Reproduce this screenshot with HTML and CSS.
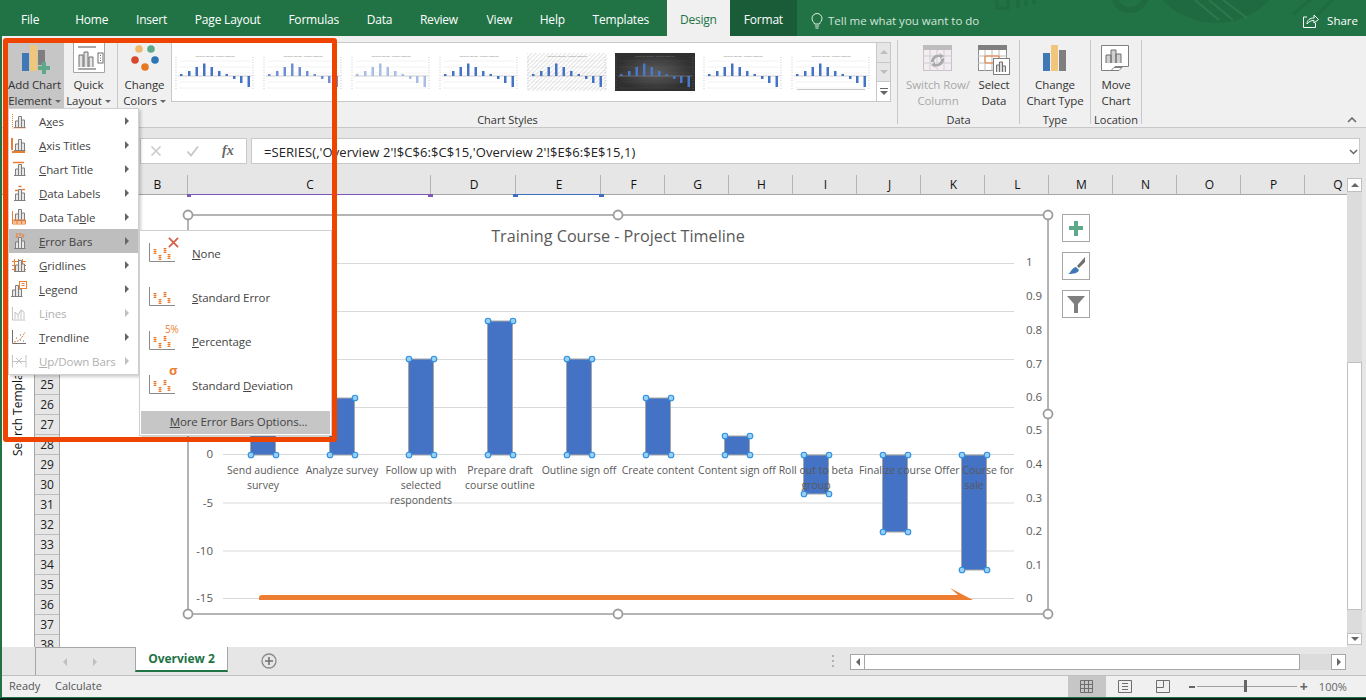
FILE: index.html
```html
<!DOCTYPE html>
<html>
<head>
    <meta charset="utf-8">
    <title>Excel - Add Chart Element</title>
    <link rel="stylesheet" href="styles.css">
</head>
<body>
<!-- shared icon shapes -->
<svg class="defs" width="0" height="0">
    <defs>
        <symbol id="minibars" viewBox="0 0 16 16">
            <path d="M4.500 14V8h3v6M7.500 14V3.500h3V14M10.500 14V7h3v7" fill="#e8e8e8" stroke="#7f7f7f"/>
            <path d="M3 14.500h11.500" stroke="#7f7f7f"/>
        </symbol>
        <symbol id="whiskers" viewBox="0 0 28 20">
            <path d="M.5 0v18.500H26" fill="none" stroke="#8a8a8a"/>
            <path d="M4.500 6.500h3M6 6.500v4M4.500 8.500h3M4.500 10.500h3M9.500 12.500h3M11 12.500v4M9.500 14.500h3M9.500 16.500h3M14.500 5.500h3M16 5.500v4M14.500 7.500h3M14.500 9.500h3M18.500 11.500h3M20 11.500v4M18.500 13.500h3M18.500 15.500h3" fill="none" stroke="#ed7d31"/>
        </symbol>
        <symbol id="thumb" viewBox="0 0 80 38">
            <text x="40" y="3.500" class="thumb-title">Training Course - Project Timeline</text>
            <path d="M4 8h72M4 14h72M4 20h72M4 29h72M4 35h72" stroke="#888" stroke-width=".3" opacity=".35"/>
            <path d="M1 4v32M78 4v32" stroke="#888" stroke-width="1" stroke-dasharray=".6 2" opacity=".7"/>
            <path d="M3 23h74" stroke="#999" stroke-width=".5"/>
            <g fill="currentColor">
                <rect x="5" y="21" width="2.500" height="2"/><rect x="13" y="18" width="2.500" height="5"/>
                <rect x="20.500" y="14" width="2.500" height="9"/><rect x="28" y="10.500" width="2.500" height="12.500"/>
                <rect x="35.500" y="14" width="2.500" height="9"/><rect x="43" y="18" width="2.500" height="5"/>
                <rect x="50.500" y="21" width="2.500" height="2"/><rect x="58" y="23" width="2.500" height="3"/>
                <rect x="65" y="23" width="2.500" height="7"/><rect x="72.500" y="23" width="2.500" height="11"/>
            </g>
        </symbol>
        <pattern id="hatch" width="3" height="3" patternUnits="userSpaceOnUse" patternTransform="rotate(45)">
            <path d="M0 0v3" stroke="#c8c8c8" stroke-width="1"/>
        </pattern>
        <radialGradient id="darkbg">
            <stop offset="0" stop-color="#5c5c5c"/><stop offset="1" stop-color="#2f2f2f"/>
        </radialGradient>
    </defs>
</svg>

<div class="app">
    <!-- tab strip -->
    <div class="tabstrip">
        <svg class="tab-pattern" width="480" height="36" viewBox="0 0 480 36">
            <g fill="none" stroke="#1f6a40">
                <path d="M117 -2v10h11v-10M138 0v8M146 0v6M154 0v4" stroke-width="3"/>
                <circle cx="250" cy="-6" r="16" stroke-width="6"/>
                <path d="M413 14L431 -1M437 15L453 -1" stroke-width="3"/>
            </g>
            <circle cx="336" cy="-51" r="74" fill="#1f6a40"/>
            <path d="M315 0l24 20M329 0l24 20M343 0l24 18" stroke="#2b7a4d" stroke-width="2"/>
        </svg>
        <div class="tab">File</div>
        <div class="tab tab-home">Home</div>
        <div class="tab">Insert</div>
        <div class="tab">Page Layout</div>
        <div class="tab">Formulas</div>
        <div class="tab">Data</div>
        <div class="tab">Review</div>
        <div class="tab tab-view">View</div>
        <div class="tab">Help</div>
        <div class="tab">Templates</div>
        <div class="tab tab-active">Design</div>
        <div class="tab tab-format">Format</div>
        <div class="tell-me">
            <svg width="12" height="16" viewBox="0 0 12 16"><path d="M3.500 11C3 9 1 8 1 5.500a5 5 0 0 1 10 0C11 8 9 9 8.500 11zM4 13h4M4.500 15h3" fill="none" stroke="#e6efe9"/></svg>
            <span>Tell me what you want to do</span>
        </div>
        <div class="share">
            <svg width="16" height="14" viewBox="0 0 16 14"><path d="M4 3H.5v10.500h12V9M4 10c0-4 3-6 7-6V1l4.500 4.500L11 9V6.500c-3 0-5 1-7 3.500z" fill="none" stroke="#fff"/></svg>
            <span>Share</span>
        </div>
    </div>

    <!-- ribbon -->
    <div class="ribbon">
        <div class="group group-layouts">
            <div class="group-row">
                <div class="rb-btn rb-add">
                    <svg class="rb-icon" width="32" height="34" viewBox="0 0 32 34">
                        <rect x="2" y="10" width="7" height="18" fill="#3f78b5"/>
                        <rect x="10" y="2" width="7" height="26" fill="#efc67a"/>
                        <rect x="18" y="7" width="7" height="15" fill="#7f7f7f"/>
                        <path d="M22 19h4v4h4v4h-4v4h-4v-4h-4v-4h4z" fill="#5fa98b"/>
                    </svg>
                    <div class="rb-label">Add Chart<br>Element<i class="caret"></i></div>
                </div>
                <div class="rb-btn rb-quick">
                    <svg class="rb-icon" width="34" height="34" viewBox="0 0 34 34">
                        <path d="M1.500 0v29.500h31V0" fill="#fff" stroke="#a6a6a6"/>
                        <path d="M6 4h18M6 26h18" stroke="#8c8c8c" stroke-width="1.500"/>
                        <path d="M7 24V12h4v12M12 24V9h4v15M17 24V14h4v10" fill="#e4e4e4" stroke="#6f6f6f"/>
                        <rect x="26" y="10" width="5" height="10" fill="#fff" stroke="#6f6f6f"/>
                        <path d="M28 12.500h1M28 15h1M28 17.500h1" stroke="#6f6f6f"/>
                    </svg>
                    <div class="rb-label">Quick<br>Layout<i class="caret"></i></div>
                </div>
            </div>
            <div class="group-name"></div>
        </div>
        <div class="group group-styles">
            <div class="group-row">
                <div class="rb-btn rb-colors">
                    <svg class="rb-icon" width="32" height="34" viewBox="0 0 32 34">
                        <circle cx="10" cy="6" r="3.800" fill="#efb86a"/>
                        <circle cx="22" cy="6" r="3.800" fill="#5fa98b"/>
                        <circle cx="6" cy="17" r="3.800" fill="#d6492e"/>
                        <circle cx="26" cy="17" r="3.800" fill="#2e75b6"/>
                        <circle cx="16" cy="24" r="3.800" fill="#e8781f"/>
                    </svg>
                    <div class="rb-label">Change<br>Colors<i class="caret"></i></div>
                </div>
                <div class="gallery">
                    <svg class="thumb thumb-blue" width="80" height="38"><use href="#thumb"/></svg>
                    <svg class="thumb thumb-dash" width="80" height="38"><use href="#thumb"/></svg>
                    <svg class="thumb thumb-light" width="80" height="38"><use href="#thumb"/></svg>
                    <svg class="thumb thumb-blue" width="80" height="38"><use href="#thumb"/></svg>
                    <svg class="thumb thumb-blue" width="80" height="38"><rect width="80" height="38" fill="url(#hatch)"/><use href="#thumb"/></svg>
                    <svg class="thumb thumb-dark" width="80" height="38"><rect width="80" height="38" fill="url(#darkbg)"/><use href="#thumb"/></svg>
                    <svg class="thumb thumb-blue" width="80" height="38"><use href="#thumb"/></svg>
                    <svg class="thumb thumb-blue" width="80" height="38"><use href="#thumb"/><path d="M6 36.500h68" stroke="#c8c8c8"/></svg>
                </div>
                <div class="gallery-spin">
                    <div class="spin-btn"><i class="tri-up tri-off"></i></div>
                    <div class="spin-btn"><i class="tri-down tri-off"></i></div>
                    <div class="spin-btn spin-more"><i class="more-line"></i><i class="tri-down"></i></div>
                </div>
            </div>
            <div class="group-name">Chart Styles</div>
        </div>
        <div class="group group-data">
            <div class="group-row">
                <div class="rb-btn rb-switch rb-off">
                    <svg class="rb-icon" width="30" height="30" viewBox="0 0 30 30">
                        <rect x=".5" y=".5" width="28" height="25" fill="#f3edf3" stroke="#c4c4c4"/>
                        <rect x="0" y="0" width="29" height="5" fill="#bdbdbd"/>
                        <path d="M0 11h29M0 18h29M7 5v21M14 5v21M21 5v21" stroke="#cfcfcf"/>
                        <path d="M8 17a7 7 0 0 1 9-7l-1-2 5 3-4 3v-2a5 5 0 0 0-6 5zM21 13a7 7 0 0 1-9 8l1 2-5-3 4-3v2a5 5 0 0 0 6-5z" fill="#a9a9a9"/>
                    </svg>
                    <div class="rb-label">Switch Row/<br>Column</div>
                </div>
                <div class="rb-btn rb-select">
                    <svg class="rb-icon" width="32" height="30" viewBox="0 0 32 30">
                        <rect x=".5" y=".5" width="28" height="25" fill="#fff" stroke="#8c8c8c"/>
                        <rect x="0" y="0" width="29" height="5" fill="#7f7f7f"/>
                        <path d="M0 11h29M0 18h29M7 5v21M14 5v21M21 5v21" stroke="#bdbdbd"/>
                        <path d="M7 11h14v7M7 11v7h14" fill="none" stroke="#ed7d31"/>
                        <rect x="15.500" y="13.500" width="16" height="16" fill="#fff" stroke="#7f7f7f"/>
                        <path d="M18.500 27v-7h3v7M21.500 27v-10h3v10M24.500 27v-6h3v6" fill="#dcdcdc" stroke="#6f6f6f"/>
                    </svg>
                    <div class="rb-label">Select<br>Data</div>
                </div>
            </div>
            <div class="group-name">Data</div>
        </div>
        <div class="group group-type">
            <div class="group-row">
                <div class="rb-btn rb-full">
                    <svg class="rb-icon" width="24" height="28" viewBox="0 0 24 28">
                        <rect x="0" y="8" width="7" height="18" fill="#3f78b5"/>
                        <rect x="8" y="0" width="7" height="26" fill="#efc67a"/>
                        <rect x="16" y="5" width="7" height="21" fill="#7f7f7f"/>
                    </svg>
                    <div class="rb-label">Change<br>Chart Type</div>
                </div>
            </div>
            <div class="group-name">Type</div>
        </div>
        <div class="group group-location">
            <div class="group-row">
                <div class="rb-btn rb-full">
                    <svg class="rb-icon" width="30" height="28" viewBox="0 0 30 28">
                        <path d="M.5.5h27v21H14l-3 4H.5z" fill="#fff" stroke="#7f7f7f"/>
                        <path d="M10 25.500l3-3h8l-3 3z" fill="#fff" stroke="#7f7f7f"/>
                        <path d="M5 17v-8h5v8M10 17V4h5v13M15 17V8h5v9" transform="translate(0 1)" fill="#cfcfcf" stroke="#6f6f6f"/>
                    </svg>
                    <div class="rb-label">Move<br>Chart</div>
                </div>
            </div>
            <div class="group-name">Location</div>
        </div>
        <svg class="ribbon-collapse" width="10" height="6" viewBox="0 0 10 6"><path d="M1 5l4-4 4 4" fill="none" stroke="#666" stroke-width="1.500"/></svg>
    </div>

    <!-- formula bar -->
    <div class="formula-bar">
        <div class="fx-box">
            <svg width="12" height="12" viewBox="0 0 12 12"><path d="M1.500 1.500l9 9M10.500 1.500l-9 9" stroke="#c8c8c8" stroke-width="1.500"/></svg>
            <svg width="14" height="12" viewBox="0 0 14 12"><path d="M1.500 6.500l3.500 4 7-9" fill="none" stroke="#c8c8c8" stroke-width="1.800"/></svg>
            <span class="fx">fx</span>
        </div>
        <div class="formula-input">=SERIES(,'Overview 2'!$C$6:$C$15,'Overview 2'!$E$6:$E$15,1)</div>
        <svg class="formula-expand" width="9" height="6" viewBox="0 0 9 6"><path d="M1 1l3.500 3.500L8 1" fill="none" stroke="#666" stroke-width="1.500"/></svg>
    </div>

    <!-- grid -->
    <div class="work-area">
        <div class="grid-main">
            <div class="col-row">
                <div class="col col-corner"></div>
                <div class="col col-a"></div>
                <div class="col col-b">B</div>
                <div class="col col-c">C</div>
                <div class="col col-d">D</div>
                <div class="col col-d">E</div>
                <div class="col">F</div>
                <div class="col">G</div>
                <div class="col">H</div>
                <div class="col">I</div>
                <div class="col">J</div>
                <div class="col">K</div>
                <div class="col">L</div>
                <div class="col">M</div>
                <div class="col">N</div>
                <div class="col">O</div>
                <div class="col">P</div>
                <div class="col col-q">Q</div>
            </div>
            <div class="grid-body">
                <div class="side-panel"><span class="side-text">Search Templates</span></div>
                <div class="row-heads">
                    <div class="row-head row-head-top"></div>
                    <div class="row-head">25</div><div class="row-head">26</div><div class="row-head">27</div>
                    <div class="row-head">28</div><div class="row-head">29</div><div class="row-head">30</div>
                    <div class="row-head">31</div><div class="row-head">32</div><div class="row-head">33</div>
                    <div class="row-head">34</div><div class="row-head">35</div><div class="row-head">36</div>
                    <div class="row-head">37</div><div class="row-head">38</div>
                </div>
                <div class="sheet">
                    <!-- coordinates below are page coordinates, the viewBox starts where the sheet does -->
                    <svg class="chart" width="1287" height="457" viewBox="60 190 1287 457">
                        <g class="range-marks">
                            <path d="M188 194.500h243" stroke="#7e57b8"/>
                            <rect x="187" y="194" width="4" height="3" fill="#7e57b8"/>
                            <rect x="428" y="194" width="5" height="3" fill="#7e57b8"/>
                            <path d="M516 194.500h85" stroke="#3f6fc0"/>
                            <rect x="513" y="194" width="5" height="3" fill="#3f6fc0"/>
                            <rect x="599" y="194" width="5" height="3" fill="#3f6fc0"/>
                        </g>
                        <rect x="188" y="215" width="860" height="399" fill="#fff" stroke="#9c9c9c" stroke-width="1.500"/>
                        <text x="618" y="242" class="chart-title">Training Course - Project Timeline</text>

                        <path d="M223 263.500h791M223 311.500h791M223 359.500h791M223 407.500h791M223 454.500h791M223 503h791M223 551h791M223 598.500h791" stroke="#d9d9d9" stroke-width="1.200"/>

                        <g class="axis-left">
                            <text x="213" y="458">0</text>
                            <text x="213" y="507">-5</text>
                            <text x="213" y="555">-10</text>
                            <text x="213" y="602">-15</text>
                        </g>
                        <g class="axis-right">
                            <text x="1026" y="266">1</text><text x="1026" y="300">0.9</text>
                            <text x="1026" y="334">0.8</text><text x="1026" y="368">0.7</text>
                            <text x="1026" y="401">0.6</text><text x="1026" y="434">0.5</text>
                            <text x="1026" y="468">0.4</text><text x="1026" y="502">0.3</text>
                            <text x="1026" y="535">0.2</text><text x="1026" y="569">0.1</text>
                            <text x="1026" y="602">0</text>
                        </g>

                        <path class="arrow" d="M259 600v-2q0-3 3-3h696l-8-7 23 12z"/>

                        <g class="bars">
                            <rect x="250.500" y="436" width="25" height="19"/>
                            <rect x="329.500" y="398" width="25" height="57"/>
                            <rect x="408.500" y="359" width="25" height="96"/>
                            <rect x="487.500" y="321" width="25" height="134"/>
                            <rect x="566.500" y="359" width="25" height="96"/>
                            <rect x="645.500" y="398" width="25" height="57"/>
                            <rect x="724.500" y="436" width="25" height="19"/>
                            <rect x="803.500" y="455" width="25" height="39"/>
                            <rect x="882.500" y="455" width="25" height="77"/>
                            <rect x="961.500" y="455" width="25" height="115"/>
                        </g>

                        <g class="cats">
                            <text x="263" y="474">Send audience</text><text x="263" y="489">survey</text>
                            <text x="342" y="474">Analyze survey</text>
                            <text x="421" y="474">Follow up with</text><text x="421" y="489">selected</text><text x="421" y="504">respondents</text>
                            <text x="500" y="474">Prepare draft</text><text x="500" y="489">course outline</text>
                            <text x="579" y="474">Outline sign off</text>
                            <text x="658" y="474">Create content</text>
                            <text x="737" y="474">Content sign off</text>
                            <text x="816" y="474">Roll out to beta</text><text x="816" y="489">group</text>
                            <text x="895" y="474">Finalize course</text>
                            <text x="974" y="474">Offer Course for</text><text x="974" y="489">sale</text>
                        </g>

                        <g class="pts">
                            <circle cx="251" cy="455" r="2.800"/><circle cx="276" cy="455" r="2.800"/>
                            <circle cx="330" cy="398" r="2.800"/><circle cx="355" cy="398" r="2.800"/><circle cx="330" cy="455" r="2.800"/><circle cx="355" cy="455" r="2.800"/>
                            <circle cx="409" cy="359" r="2.800"/><circle cx="434" cy="359" r="2.800"/><circle cx="409" cy="455" r="2.800"/><circle cx="434" cy="455" r="2.800"/>
                            <circle cx="488" cy="321" r="2.800"/><circle cx="513" cy="321" r="2.800"/><circle cx="488" cy="455" r="2.800"/><circle cx="513" cy="455" r="2.800"/>
                            <circle cx="567" cy="359" r="2.800"/><circle cx="592" cy="359" r="2.800"/><circle cx="567" cy="455" r="2.800"/><circle cx="592" cy="455" r="2.800"/>
                            <circle cx="646" cy="398" r="2.800"/><circle cx="671" cy="398" r="2.800"/><circle cx="646" cy="455" r="2.800"/><circle cx="671" cy="455" r="2.800"/>
                            <circle cx="725" cy="436" r="2.800"/><circle cx="750" cy="436" r="2.800"/><circle cx="725" cy="455" r="2.800"/><circle cx="750" cy="455" r="2.800"/>
                            <circle cx="804" cy="455" r="2.800"/><circle cx="829" cy="455" r="2.800"/><circle cx="804" cy="494" r="2.800"/><circle cx="829" cy="494" r="2.800"/>
                            <circle cx="883" cy="455" r="2.800"/><circle cx="908" cy="455" r="2.800"/><circle cx="883" cy="532" r="2.800"/><circle cx="908" cy="532" r="2.800"/>
                            <circle cx="962" cy="455" r="2.800"/><circle cx="987" cy="455" r="2.800"/><circle cx="962" cy="570" r="2.800"/><circle cx="987" cy="570" r="2.800"/>
                        </g>

                        <g class="handles">
                            <circle cx="188" cy="215" r="4.500"/><circle cx="618" cy="215" r="4.500"/><circle cx="1048" cy="215" r="4.500"/>
                            <circle cx="1048" cy="414" r="4.500"/>
                            <circle cx="188" cy="614" r="4.500"/><circle cx="618" cy="614" r="4.500"/><circle cx="1048" cy="614" r="4.500"/>
                        </g>

                        <g class="chart-tools">
                            <rect x="1062.500" y="214.500" width="27" height="27"/>
                            <rect x="1062.500" y="252.500" width="27" height="27"/>
                            <rect x="1062.500" y="290.500" width="27" height="27"/>
                        </g>
                        <path d="M1074 221h4v5h5v4h-5v6h-4v-6h-5v-4h5z" fill="#5fa98b"/>
                        <path d="M1085 257l-8 9 2 2 6-6z" fill="#6f6f6f"/>
                        <path d="M1076 267l3 3c-1 3-5 4-11 4 3-1 3-6 8-7z" fill="#3f78b5"/>
                        <path d="M1067 296h18l-7 8v9h-4v-9z" fill="#7f7f7f"/>
                    </svg>
                </div>
            </div>
        </div>
        <div class="v-scroll">
            <div class="scroll-btn"><i class="tri-up"></i></div>
            <div class="v-track"><div class="v-thumb"></div></div>
            <div class="scroll-btn scroll-btn-low"><i class="tri-down"></i></div>
        </div>
    </div>

    <!-- sheet tabs -->
    <div class="sheet-tabs">
        <div class="tab-nav">
            <i class="tri-left tri-off"></i>
            <i class="tri-right tri-off"></i>
        </div>
        <div class="sheet-tab">Overview 2</div>
        <svg class="add-sheet" width="16" height="16" viewBox="0 0 16 16"><circle cx="8" cy="8" r="7" fill="none" stroke="#8a8a8a" stroke-width="1.300"/><path d="M8 4v8M4 8h8" stroke="#6f6f6f" stroke-width="1.500"/></svg>
        <div class="tab-dots"></div>
        <div class="h-scroll">
            <div class="h-btn"><i class="tri-left"></i></div>
            <div class="h-thumb"></div>
            <div class="h-track"></div>
            <div class="h-btn"><i class="tri-right"></i></div>
        </div>
    </div>

    <!-- status bar -->
    <div class="status-bar">
        <span class="status-ready">Ready</span>
        <span>Calculate</span>
        <div class="view-btns">
            <div class="view-btn view-on">
                <svg width="13" height="13" viewBox="0 0 13 13"><path d="M.5.5h12v12H.5zM.5 4.500h12M.5 8.500h12M4.500.5v12M8.500.5v12" fill="none" stroke="#6f6f6f"/></svg>
            </div>
            <div class="view-btn">
                <svg width="14" height="13" viewBox="0 0 14 13"><path d="M.5.5h13v12H.5zM4 3.500h6M4 6.500h6M4 9.500h6" fill="none" stroke="#6f6f6f"/></svg>
            </div>
            <div class="view-btn">
                <svg width="14" height="13" viewBox="0 0 14 13"><path d="M.5.5h13v12H.5zM.5 7.500h7V.5" fill="none" stroke="#6f6f6f"/></svg>
            </div>
        </div>
        <div class="zoom-ctl">
            <i class="zoom-minus"></i>
            <div class="zoom-slider"><i class="zoom-knob"></i></div>
            <span class="zoom-plus">+</span>
            <span class="zoom-val">100%</span>
        </div>
    </div>
    <div class="desktop-edge"></div>

    <!-- Add Chart Element menu -->
    <div class="menu">
        <div class="menu-item">
            <svg width="16" height="16" viewBox="0 0 16 16"><use href="#minibars"/><path d="M1.500 1v14h13" fill="none" stroke="#ed7d31" stroke-dasharray="1 1"/></svg>
            <span>A<u>x</u>es</span><i class="tri-right"></i>
        </div>
        <div class="menu-item">
            <svg width="16" height="16" viewBox="0 0 16 16"><use href="#minibars" y="-1"/><path d="M1 1v12" stroke="#ed7d31" stroke-width="2"/><path d="M1 15h13" stroke="#ed7d31" stroke-width="2"/></svg>
            <span><u>A</u>xis Titles</span><i class="tri-right"></i>
        </div>
        <div class="menu-item">
            <svg width="16" height="16" viewBox="0 0 16 16"><use href="#minibars"/><path d="M2 1.500h11" stroke="#ed7d31" stroke-width="1.500"/></svg>
            <span><u>C</u>hart Title</span><i class="tri-right"></i>
        </div>
        <div class="menu-item">
            <svg width="16" height="16" viewBox="0 0 16 16"><use href="#minibars" y="1"/><path d="M4 5.500h3M7.500 1.500h3M11 4.500h3" stroke="#ed7d31" stroke-width="1.500"/></svg>
            <span><u>D</u>ata Labels</span><i class="tri-right"></i>
        </div>
        <div class="menu-item">
            <svg width="16" height="16" viewBox="0 0 16 16"><use href="#minibars" y="-3"/><path d="M1.500 2v13h13v-4h-13M1.500 13h13M6 11v4M10.500 11v4" fill="none" stroke="#ed7d31"/></svg>
            <span>Data Ta<u>b</u>le</span><i class="tri-right"></i>
        </div>
        <div class="menu-item menu-item-on">
            <svg width="16" height="16" viewBox="0 0 16 16"><use href="#minibars" y="1"/><path d="M6 4V0M4.500 4h3M9 3V0M7.500 0h3M12 5V2M10.500 2h3" fill="none" stroke="#ed7d31"/></svg>
            <span><u>E</u>rror Bars</span><i class="tri-right"></i>
        </div>
        <div class="menu-item">
            <svg width="16" height="16" viewBox="0 0 16 16"><path d="M1 4.500h14M1 8.500h14M1 12.500h14M3.500 2v13M7.500 2v13M11.500 2v13" stroke="#ed7d31"/><use href="#minibars"/></svg>
            <span><u>G</u>ridlines</span><i class="tri-right"></i>
        </div>
        <div class="menu-item">
            <svg width="16" height="16" viewBox="0 0 16 16"><use href="#minibars" x="-3" y="1"/><rect x="8.500" y=".5" width="7" height="7" fill="#fff" stroke="#ed7d31"/><path d="M10.500 2.500h3M10.500 4.500h3" stroke="#ed7d31"/></svg>
            <span><u>L</u>egend</span><i class="tri-right"></i>
        </div>
        <div class="menu-item menu-item-off">
            <svg width="16" height="16" viewBox="0 0 16 16"><path d="M1.500 2v13h13M4 14V7l3 3 3-5 3 2v7M7 10v4M10 5v9" fill="none" stroke="#c4c4c4"/></svg>
            <span>L<u>i</u>nes</span><i class="tri-right"></i>
        </div>
        <div class="menu-item">
            <svg width="16" height="16" viewBox="0 0 16 16"><path d="M1.500 1v13.500H15" fill="none" stroke="#6f6f6f"/><path d="M3 13c5 0 8-4 11-10" fill="none" stroke="#ed7d31" stroke-dasharray="2 1"/><path d="M5 9h1M9 11h1M12 12h1M9 6h1" stroke="#6f6f6f"/></svg>
            <span><u>T</u>rendline</span><i class="tri-right"></i>
        </div>
        <div class="menu-item menu-item-off">
            <svg width="16" height="16" viewBox="0 0 16 16"><path d="M1.500 2v12.500M15 2v12.500M1.500 8.500h13M5 5l6 6M11 5l-6 6" fill="none" stroke="#c4c4c4"/></svg>
            <span><u>U</u>p/Down Bars</span><i class="tri-right"></i>
        </div>
    </div>

    <!-- Error Bars submenu -->
    <div class="submenu">
        <div class="sub-item">
            <div class="sub-icon">
                <svg width="28" height="20"><use href="#whiskers"/></svg>
                <svg class="sub-x" width="11" height="11" viewBox="0 0 12 12"><path d="M1 1l10 10M11 1L1 11" stroke="#d6604a" stroke-width="2"/></svg>
            </div>
            <span><u>N</u>one</span>
        </div>
        <div class="sub-item">
            <div class="sub-icon"><svg width="28" height="20"><use href="#whiskers"/></svg></div>
            <span><u>S</u>tandard Error</span>
        </div>
        <div class="sub-item">
            <div class="sub-icon">
                <svg width="28" height="20"><use href="#whiskers"/></svg>
                <b class="sub-mark sub-pct">5%</b>
            </div>
            <span><u>P</u>ercentage</span>
        </div>
        <div class="sub-item">
            <div class="sub-icon">
                <svg width="28" height="20"><use href="#whiskers"/></svg>
                <b class="sub-mark sub-sigma">σ</b>
            </div>
            <span>Standard <u>D</u>eviation</span>
        </div>
        <div class="sub-more"><span><u>M</u>ore Error Bars Options...</span></div>
    </div>

    <div class="callout"></div>
</div>
</body>
</html>
```

FILE: styles.css
```css
/* page */
* {
    box-sizing: border-box;
}

body {
    margin: 0;
    background-color: #217346;
    font-family: "Open Sans", "Noto Sans", sans-serif;
    font-size: 12px;
    color: #444;
    overflow: hidden;
}

i {
    display: block;
    font-style: normal;
}

.defs {
    position: absolute;
}

.app {
    position: relative;
    width: 1366px;
    height: 700px;
    padding-left: 2px;
    overflow: hidden;
    display: flex;
    flex-direction: column;
}

/* tab strip */
.tabstrip {
    position: relative;
    height: 36px;
    margin-left: -2px;
    padding-left: 7.15px;
    display: flex;
    background-color: #217346;
    color: #fff;
    flex: none;
}

.tab-pattern {
    position: absolute;
    left: 880px;
    top: 0;
}

.tab {
    position: relative;
    height: 36px;
    padding: 7px 13.85px 0;
    font-size: 12px;
    letter-spacing: -0.2px;
    line-height: 26px;
    white-space: nowrap;
}

.tab-home {
    margin-left: 8.3px;
}

.tab-view {
    margin-left: 1px;
}

.tab-active {
    width: 63px;
    margin-left: 4px;
    padding: 7px 0 0;
    text-align: center;
    background-color: #f0f0f0;
    color: #217346;
}

.tab-format {
    width: 67px;
    padding: 7px 0 0;
    text-align: center;
    background-color: #1b5c38;
}

.tell-me {
    position: absolute;
    left: 811px;
    top: 13px;
    display: flex;
    gap: 5px;
    font-size: 11.5px;
    color: #d4e3da;
    line-height: 16px;
}

.share {
    position: absolute;
    right: 8px;
    top: 13px;
    display: flex;
    gap: 8px;
    font-size: 11.5px;
    line-height: 16px;
    align-items: center;
}

/* ribbon */
.ribbon {
    position: relative;
    height: 92px;
    flex: none;
    display: flex;
    background-color: #f0f0f0;
    border-bottom: 1px solid #c8c8c8;
}

.group {
    margin-top: 4px;
    height: 84px;
    display: flex;
    flex-direction: column;
    border-right: 1px solid #c8c8c8;
    flex: none;
}

.group-layouts {
    width: 116px;
    padding-left: 6px;
}

.group-styles {
    width: 780px;
}

.group-data {
    width: 122px;
}

.group-type {
    width: 71px;
}

.group-location {
    width: 51px;
}

.group-row {
    height: 72px;
    display: flex;
}

.group-name {
    height: 12px;
    text-align: center;
    font-size: 11px;
    line-height: 16px;
    color: #333;
}

.rb-btn {
    margin-top: 3px;
    height: 66px;
    display: flex;
    flex-direction: column;
    align-items: center;
    flex: none;
}

.rb-icon {
    flex: none;
}

.rb-label {
    margin-top: auto;
    text-align: center;
    font-size: 11.5px;
    letter-spacing: -0.1px;
    line-height: 16px;
    white-space: nowrap;
    color: #333;
}

.rb-off .rb-label {
    color: #a8a8a8;
}

.rb-add {
    width: 56px;
    background-color: #c6c6c6;
}

.rb-add .rb-label {
    margin-right: 3px;
}

.rb-quick {
    width: 41px;
    margin-left: 4px;
}

.rb-colors {
    width: 53px;
}

.rb-switch {
    width: 70px;
    margin-left: 5px;
}

.rb-select {
    width: 42px;
}

.rb-full {
    width: 100%;
}

.rb-switch .rb-icon,
.rb-select .rb-icon,
.rb-full .rb-icon {
    margin-top: 2px;
}

.caret {
    display: inline-block;
    margin-left: 3px;
    vertical-align: 2px;
    border-left: 3px solid transparent;
    border-right: 3px solid transparent;
    border-top: 3px solid #666;
}

.gallery {
    margin-top: 2px;
    width: 706px;
    height: 60px;
    padding-left: 3px;
    display: flex;
    gap: 8px;
    align-items: center;
    background-color: #fff;
    border: 1px solid #c8c8c8;
}

.thumb {
    flex: none;
}

.thumb-title {
    font-size: 2.5px;
    text-anchor: middle;
    fill: #777;
}

.thumb-blue {
    color: #4472c4;
}

.thumb-dash {
    color: #6e8fd2;
}

.thumb-light {
    color: #a8bde6;
}

.thumb-dark {
    color: #4a78cc;
}

.thumb-dark .thumb-title {
    fill: #ddd;
}

.gallery-spin {
    margin-top: 2px;
    width: 14px;
    height: 60px;
    display: flex;
    flex-direction: column;
    border: 1px solid #c8c8c8;
    border-left: none;
}

.spin-btn {
    flex: 1;
    display: flex;
    flex-direction: column;
    align-items: center;
    justify-content: center;
    gap: 2px;
    border-bottom: 1px solid #c8c8c8;
    background-color: #e6e6e6;
}

.spin-more {
    background-color: #fff;
    border-bottom: none;
}

.more-line {
    width: 8px;
    height: 1px;
    background-color: #666;
}

.tri-up,
.tri-down,
.tri-left,
.tri-right {
    width: 0;
    height: 0;
    flex: none;
}

.tri-up {
    border-left: 4px solid transparent;
    border-right: 4px solid transparent;
    border-bottom: 4px solid #666;
}

.tri-down {
    border-left: 4px solid transparent;
    border-right: 4px solid transparent;
    border-top: 4px solid #666;
}

.tri-left {
    border-top: 4px solid transparent;
    border-bottom: 4px solid transparent;
    border-right: 4px solid #666;
}

.tri-right {
    border-top: 4px solid transparent;
    border-bottom: 4px solid transparent;
    border-left: 4px solid #666;
}

.tri-up.tri-off {
    border-bottom-color: #bdbdbd;
}

.tri-down.tri-off {
    border-top-color: #bdbdbd;
}

.tri-left.tri-off {
    border-right-color: #c0c0c0;
}

.tri-right.tri-off {
    border-left-color: #c0c0c0;
}

.ribbon-collapse {
    position: absolute;
    left: 1345px;
    top: 81px;
}

/* formula bar */
.formula-bar {
    position: relative;
    height: 47px;
    flex: none;
    padding: 10px 0 0 138px;
    display: flex;
    gap: 4px;
    background-color: #e6e6e6;
}

.fx-box {
    width: 107px;
    height: 26px;
    padding-left: 6px;
    display: flex;
    align-items: center;
    background-color: #fff;
    border: 1px solid #c8c8c8;
}

.fx-box svg:first-child {
    margin-left: 3px;
}

.fx-box svg + svg {
    margin-left: 24px;
}

.fx {
    margin-left: 22px;
    font-family: "Liberation Serif", serif;
    font-style: italic;
    font-weight: bold;
    font-size: 14px;
    color: #666;
}

.formula-input {
    width: 1109px;
    height: 26px;
    padding-left: 12px;
    font-size: 13px;
    letter-spacing: 0.07px;
    line-height: 26px;
    color: #222;
    background-color: #fff;
    border: 1px solid #c8c8c8;
}

.formula-expand {
    position: absolute;
    left: 1347px;
    top: 21px;
}

/* grid */
.work-area {
    height: 472px;
    flex: none;
    display: flex;
    background-color: #e6e6e6;
}

.grid-main {
    width: 1345px;
    display: flex;
    flex-direction: column;
    overflow: hidden;
}

.col-row {
    height: 20px;
    flex: none;
    display: flex;
    border-bottom: 1px solid #a6a6a6;
}

.col {
    width: 64px;
    flex: none;
    padding-left: 2px;
    text-align: center;
    font-size: 12px;
    line-height: 19px;
    color: #111;
    border-right: 1px solid #b4b4b4;
}

.col-corner {
    width: 58px;
}

.col-a {
    width: 66px;
}

.col-b {
    width: 62px;
}

.col-c {
    width: 243px;
}

.col-d {
    width: 85px;
}

.col-q {
    border-right: none;
}

.grid-body {
    position: relative;
    flex: 1;
    display: flex;
    min-height: 0;
}

.side-panel {
    width: 33px;
    flex: none;
    background-color: #fff;
    border-right: 1px solid #a6a6a6;
}

.side-text {
    display: block;
    height: 80px;
    margin: 181px 0 0 7px;
    overflow: hidden;
    writing-mode: vertical-rl;
    transform: rotate(180deg);
    font-size: 12px;
    color: #111;
    white-space: nowrap;
}

.row-heads {
    width: 25px;
    flex: none;
    overflow: hidden;
    background-color: #e6e6e6;
    border-right: 1px solid #a6a6a6;
}

.row-head {
    height: 20px;
    text-align: center;
    font-size: 12px;
    line-height: 19px;
    color: #222;
    border-bottom: 1px solid #bdbdbd;
}

/* rows 16 to 24 sit behind the menus */
.row-head-top {
    height: 180px;
}

.sheet {
    position: relative;
    flex: 1;
    background-color: #fff;
}

.chart {
    position: absolute;
    left: 0;
    top: -5px;
}

.chart text {
    font-family: "Open Sans", "Noto Sans", sans-serif;
    fill: #595959;
}

.chart-title {
    font-size: 16.2px;
    text-anchor: middle;
}

.axis-left text {
    font-size: 11.5px;
    text-anchor: end;
}

.axis-right text {
    font-size: 11.5px;
}

.cats text {
    font-size: 10.5px;
    text-anchor: middle;
}

.bars rect {
    fill: #4472c4;
    stroke: #a6a6a6;
}

.pts circle {
    fill: #97cff5;
    stroke: #2e8fe0;
    stroke-width: 1.100;
}

.handles circle {
    fill: #fff;
    stroke: #9c9c9c;
    stroke-width: 1.800;
}

.arrow {
    fill: #ed7d31;
}

.chart-tools rect {
    fill: #fff;
    stroke: #a6a6a6;
}

/* scrollbars */
.v-scroll {
    width: 19px;
    padding-top: 3px;
    display: flex;
    flex-direction: column;
}

.scroll-btn {
    width: 15px;
    height: 14px;
    display: flex;
    align-items: center;
    justify-content: center;
    background-color: #fff;
    border: 1px solid #c0c0c0;
}

.scroll-btn-low {
    height: 12px;
    margin-bottom: 2px;
}

.v-track {
    width: 15px;
    flex: 1;
    background-color: #dcdcdc;
}

.v-thumb {
    margin-top: 170px;
    height: 248px;
    background-color: #fff;
    border: 1px solid #c0c0c0;
}

/* sheet tabs */
.sheet-tabs {
    height: 29px;
    flex: none;
    padding-left: 33px;
    display: flex;
    background-color: #e6e6e6;
    border-bottom: 1px solid #c0c0c0;
}

.tab-nav {
    width: 100px;
    padding: 0 38px 0 27px;
    display: flex;
    align-items: center;
    justify-content: space-between;
    border-left: 1px solid #a6a6a6;
    border-top: 1px solid #a6a6a6;
}

.sheet-tab {
    width: 93px;
    height: 25px;
    text-align: center;
    font-weight: bold;
    font-size: 12px;
    line-height: 23px;
    color: #217346;
    background-color: #fff;
    border-left: 1px solid #a6a6a6;
    border-right: 1px solid #a6a6a6;
    border-bottom: 2px solid #217346;
}

.add-sheet {
    margin: 6px 0 0 33px;
    flex: none;
}

.tab-dots {
    width: 2px;
    height: 12px;
    margin: 8px 0 0 555px;
    background-image: repeating-linear-gradient(#b0b0b0 0 2px, transparent 2px 5px);
}

.h-scroll {
    width: 496px;
    height: 16px;
    margin: 7px 0 0 16px;
    display: flex;
}

.h-btn {
    width: 15px;
    display: flex;
    align-items: center;
    justify-content: center;
    background-color: #fff;
    border: 1px solid #a6a6a6;
}

.h-thumb {
    width: 435px;
    background-color: #fff;
    border: 1px solid #a6a6a6;
    border-left: none;
}

.h-track {
    width: 31px;
    background-color: #dcdcdc;
}

/* status bar */
.status-bar {
    height: 21px;
    flex: none;
    padding: 0 0 2px 7px;
    display: flex;
    align-items: center;
    font-size: 11px;
    color: #555;
    background-color: #f0f0f0;
}

.status-ready {
    width: 46px;
}

.view-btns {
    margin: 2px 0 0 966px;
    display: flex;
    height: 21px;
}

.view-btn {
    width: 38px;
    display: flex;
    align-items: center;
    justify-content: center;
}

.view-on {
    background-color: #c6c6c6;
}

.zoom-ctl {
    margin: 2px 0 0 7px;
    display: flex;
    align-items: center;
}

.zoom-minus {
    width: 6px;
    height: 2px;
    background-color: #666;
}

.zoom-slider {
    position: relative;
    width: 100px;
    height: 1px;
    margin-left: 2px;
    background-color: #a0a0a0;
}

.zoom-knob {
    position: absolute;
    left: 47px;
    top: -6px;
    width: 3px;
    height: 12px;
    background-color: #666;
}

.zoom-plus {
    margin-left: 3px;
    font-size: 14px;
    font-weight: bold;
    color: #666;
}

.zoom-val {
    margin-left: 11px;
    font-size: 11px;
    color: #666;
}

.desktop-edge {
    height: 3px;
    margin-left: -2px;
    flex: none;
    background-color: #12201a;
    border-top: 1px solid #217346;
}

/* chart element menu */
.menu {
    position: absolute;
    left: 8px;
    top: 108px;
    width: 131px;
    height: 267px;
    background-color: #fff;
    border: 1px solid #d0d0d0;
    box-shadow: 2px 2px 3px rgba(0, 0, 0, 0.2);
}

.menu-item {
    height: 24px;
    padding: 0 9px 0 2px;
    display: flex;
    align-items: center;
    font-size: 11.5px;
    letter-spacing: -0.1px;
    color: #444;
}

.menu-item svg {
    flex: none;
}

.menu-item span {
    margin-left: 12px;
    white-space: nowrap;
}

.menu-item .tri-right {
    margin-left: auto;
}

.menu-item-on {
    background-color: #bebebe;
}

.menu-item-off span {
    color: #b0b0b0;
}

.menu-item-off .tri-right {
    border-left-color: #c0c0c0;
}

.submenu {
    position: absolute;
    left: 139px;
    top: 230px;
    width: 193px;
    height: 206px;
    background-color: #fff;
    border: 1px solid #d0d0d0;
    box-shadow: 2px 2px 3px rgba(0, 0, 0, 0.2);
}

.sub-item {
    height: 44px;
    padding-left: 9px;
    display: flex;
    align-items: center;
    font-size: 11.5px;
    letter-spacing: -0.1px;
    color: #444;
}

.sub-icon {
    position: relative;
    width: 43px;
    height: 20px;
    flex: none;
}

.sub-x {
    position: absolute;
    left: 19px;
    top: -6px;
}

.sub-mark {
    position: absolute;
    font-size: 11px;
    color: #ed7d31;
    font-weight: normal;
}

.sub-pct {
    left: 16px;
    top: -9px;
    font-size: 10px;
    letter-spacing: -0.3px;
}

.sub-sigma {
    left: 20px;
    top: -14px;
    font-size: 13px;
    font-weight: bold;
}

.sub-more {
    margin: 4px 1px 0;
    height: 23px;
    padding-left: 6px;
    text-align: center;
    font-size: 11.5px;
    letter-spacing: -0.1px;
    line-height: 22px;
    color: #444;
    background-color: #c6c6c6;
}

/* red callout from the article */
.callout {
    position: absolute;
    left: 3px;
    top: 38px;
    width: 334px;
    height: 404px;
    border: 5px solid #ef4300;
    border-radius: 3px;
}
```
